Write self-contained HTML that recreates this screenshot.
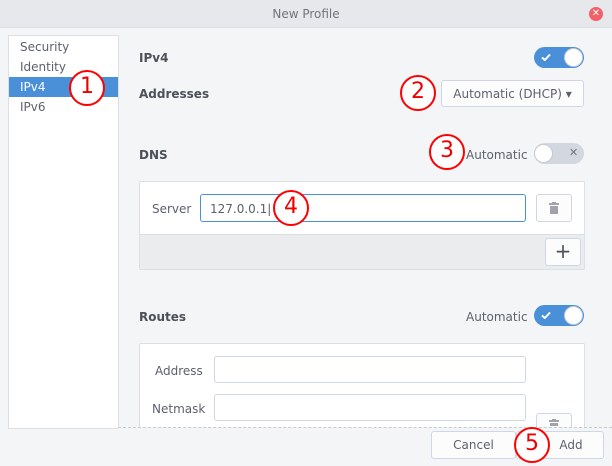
<!DOCTYPE html>
<html><head><meta charset="utf-8"><style>
*{box-sizing:border-box;margin:0;padding:0}
body{width:612px;height:466px;overflow:hidden;background:#f4f5f7;font-family:"DejaVu Sans","Liberation Sans",sans-serif;font-size:12px;color:#5c616c;position:relative}
.a{position:absolute}
.title{left:0;top:0;width:612px;height:28px;background:#e7e8eb;border-bottom:1px solid #dcdfe3;text-align:center;line-height:28px;color:#70747c;font-size:12px}
.close{left:589px;top:7px;width:14px;height:14px;border-radius:50%;background:#f46067;color:#fff;font-size:10px;line-height:14px;text-align:center;font-weight:bold}
.side{left:8px;top:35px;width:111px;height:394px;background:#fff;border:1px solid #dcdfe3;padding-top:1px}
.side div{height:20px;line-height:20px;padding-left:11px;font-size:12px}
.sel{background:#4a90d9;color:#fff}
.b{font-weight:bold;font-size:12px;color:#4c5058}
.tog{width:50px;height:21px;border-radius:11px}
.tog.on{background:#4a90d9}
.tog.off{background:#d3d7df}
.knob{position:absolute;top:1px;width:19px;height:19px;border-radius:50%;background:#fff;border:1px solid #c5cad3}
.box{background:#fff;border:1px solid #dcdfe3;border-radius:2px}
.inp{background:#fff;border:1px solid #cfd6e6;border-radius:3px}
.btn{background:#fcfcfd;border:1px solid #cfd6e6;border-radius:3px;text-align:center}
.c{width:36px;height:36px;border:2.5px solid #f00;border-radius:50%;background:#fff;color:#e00;font-size:22px;text-align:center;line-height:30px;font-family:"DejaVu Sans",sans-serif}
.ck{position:absolute;left:7px;top:6px}
</style></head><body>
<div class="a title">New Profile</div>
<div class="a close">✕</div>
<div class="a side"><div>Security</div><div>Identity</div><div class="sel">IPv4</div><div>IPv6</div></div>
<div class="a c" style="left:69px;top:70px">1</div>

<div class="a b" style="left:139px;top:51px">IPv4</div>
<div class="a tog on" style="left:534px;top:47px"><svg class="ck" width="10" height="8" viewBox="0 0 10 8"><path d="M1 4.5L3.8 7L9 1.5" stroke="#fff" stroke-width="2" fill="none"/></svg><div class="knob" style="left:30px"></div></div>
<div class="a b" style="left:139px;top:87px">Addresses</div>
<div class="a btn" style="left:441px;top:80px;width:143px;height:27px;line-height:26px;font-size:12px">Automatic (DHCP) ▾</div>
<div class="a c" style="left:400px;top:75px">2</div>

<div class="a b" style="left:139px;top:148px">DNS</div>
<div class="a" style="left:466px;top:148px">Automatic</div>
<div class="a tog off" style="left:534px;top:143px"><div class="knob" style="left:0"></div><span class="a" style="left:35px;top:3px;font-size:11px;color:#70747c">✕</span></div>
<div class="a c" style="left:429px;top:134px">3</div>

<div class="a box" style="left:139px;top:181px;width:446px;height:89px;background:#ebecee">
<div style="background:#fff;height:53px;border-bottom:1px solid #dcdfe3"></div></div>
<div class="a" style="left:152px;top:202px">Server</div>
<div class="a inp" style="left:200px;top:194px;width:326px;height:28px;border-color:#4a90d9;padding:7px 9px">127.0.0.1|</div>
<div class="a btn" style="left:536px;top:194px;width:36px;height:28px"><svg width="14" height="14" viewBox="0 0 14 14" style="margin-top:6px"><rect x="2" y="2" width="10" height="2" fill="#a0a3a9"/><rect x="5" y="1" width="4" height="1" fill="#a0a3a9"/><rect x="3" y="5" width="8" height="8" fill="#a0a3a9"/></svg></div>
<div class="a btn" style="left:545px;top:238px;width:36px;height:28px;font-size:20px;line-height:24px;color:#4c5058">+</div>
<div class="a c" style="left:273px;top:190px">4</div>

<div class="a b" style="left:139px;top:310px">Routes</div>
<div class="a" style="left:466px;top:310px">Automatic</div>
<div class="a tog on" style="left:534px;top:305px"><svg class="ck" width="10" height="8" viewBox="0 0 10 8"><path d="M1 4.5L3.8 7L9 1.5" stroke="#fff" stroke-width="2" fill="none"/></svg><div class="knob" style="left:30px"></div></div>

<div class="a box" style="left:139px;top:343px;width:446px;height:86px"></div>
<div class="a" style="left:155px;top:364px">Address</div>
<div class="a inp" style="left:214px;top:356px;width:312px;height:27px"></div>
<div class="a" style="left:152px;top:402px">Netmask</div>
<div class="a inp" style="left:214px;top:394px;width:312px;height:27px"></div>
<div class="a btn" style="left:536px;top:413px;width:36px;height:20px"><svg width="14" height="8" viewBox="0 0 14 8" style="margin-top:4px"><rect x="2" y="2" width="10" height="2" fill="#a0a3a9"/><rect x="5" y="1" width="4" height="1" fill="#a0a3a9"/><rect x="3" y="5" width="8" height="3" fill="#a0a3a9"/></svg></div>
<div class="a" style="left:118px;top:427px;width:494px;height:39px;background:#f4f5f7;border-top:1px dashed #c8ccd2"></div>
<div class="a btn" style="left:431px;top:431px;width:85px;height:28px;line-height:27px">Cancel</div>
<div class="a btn" style="left:516px;top:431px;width:88px;height:28px;line-height:27px;padding-left:22px">Add</div>
<div class="a c" style="left:514px;top:427px">5</div>
</body></html>
